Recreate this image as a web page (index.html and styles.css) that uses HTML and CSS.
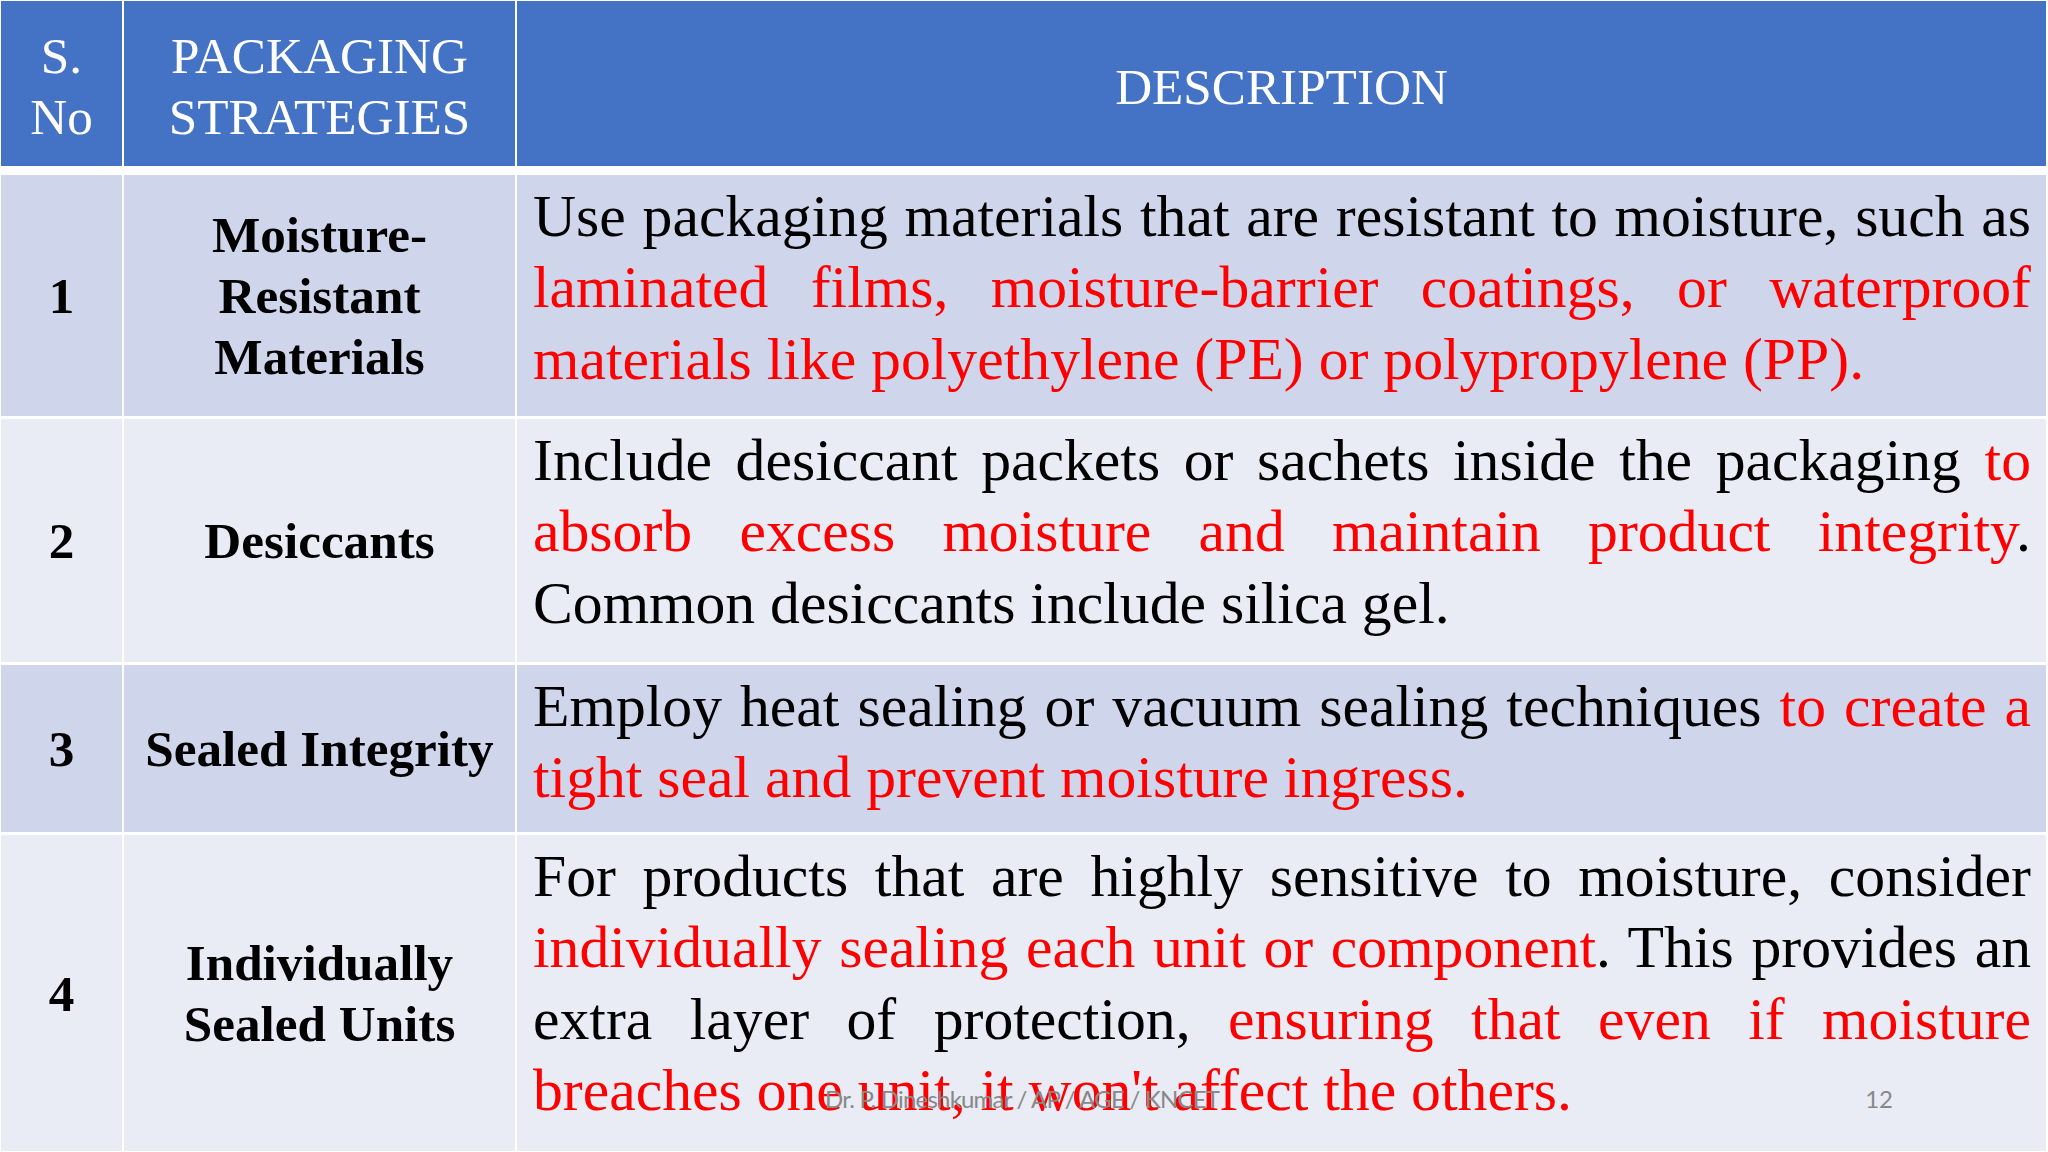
FILE: index.html
```html
<!DOCTYPE html>
<html lang="en">
<head>
<meta charset="utf-8">
<title>Packaging Strategies</title>
<link rel="stylesheet" href="styles.css">
</head>
<body>
<main class="slide">
  <div class="sheet">
    <div class="cell head">S.<br>No</div>
    <div class="cell head">PACKAGING<br>STRATEGIES</div>
    <div class="cell head">DESCRIPTION</div>

    <div class="cell num odd">1</div>
    <div class="cell name odd">Moisture-<br>Resistant<br>Materials</div>
    <div class="cell desc odd">
      <span class="line">Use packaging materials that are resistant to moisture, such as</span>
      <span class="line red">laminated films, moisture-barrier coatings, or waterproof</span>
      <span class="line last red">materials like polyethylene (PE) or polypropylene (PP).</span>
    </div>

    <div class="cell num even">2</div>
    <div class="cell name even">Desiccants</div>
    <div class="cell desc even">
      <span class="line">Include desiccant packets or sachets inside the packaging <span class="red">to</span></span>
      <span class="line"><span class="red">absorb excess moisture and maintain product integrity</span>.</span>
      <span class="line last">Common desiccants include silica gel.</span>
    </div>

    <div class="cell num odd">3</div>
    <div class="cell name odd">Sealed Integrity</div>
    <div class="cell desc odd">
      <span class="line">Employ heat sealing or vacuum sealing techniques <span class="red">to create a</span></span>
      <span class="line last red">tight seal and prevent moisture ingress.</span>
    </div>

    <div class="cell num even">4</div>
    <div class="cell name even">Individually<br>Sealed Units</div>
    <div class="cell desc even">
      <span class="line">For products that are highly sensitive to moisture, consider</span>
      <span class="line"><span class="red">individually sealing each unit or component</span>. This provides an</span>
      <span class="line">extra layer of protection, <span class="red">ensuring that even if moisture</span></span>
      <span class="line last red">breaches one unit, it won't affect the others.</span>
    </div>
  </div>

  <footer class="slide-footer">
    <span class="author">Dr. P. Dineshkumar / AP / AGE / KNCET</span>
    <span class="page-no">12</span>
  </footer>
</main>
</body>
</html>
```

FILE: styles.css
```css
html, body {
  margin: 0;
  padding: 0;
  background: #ffffff;
}

.slide {
  position: relative;
  width: 2048px;
  height: 1152px;
  overflow: hidden;
  background: #ffffff;
  font-family: "Liberation Serif", "Times New Roman", serif;
}

.sheet {
  display: grid;
  grid-template-columns: 121px 391px 1529px;
  grid-template-rows: 171px 241px 243px 167px 316px;
  column-gap: 2px;
  row-gap: 3px;
  padding: 1px 2px 4px 1px;
}

.cell {
  box-sizing: border-box;
  color: #000000;
}

.head {
  background: #4472c4;
  color: #ffffff;
  font-size: 51.2px;
  line-height: 61px;
  text-align: center;
  display: flex;
  align-items: center;
  justify-content: center;
  padding-top: 5px;
  margin-bottom: 6px;
}

.odd {
  background: #cfd5ea;
}

.even {
  background: #e9ebf5;
}

.num,
.name {
  display: flex;
  align-items: center;
  justify-content: center;
  text-align: center;
  font-weight: bold;
  font-size: 51.2px;
  line-height: 61px;
}

.desc {
  padding: 6px 15px 0 16px;
  font-size: 59.7px;
  line-height: 71.3px;
}

.line {
  display: block;
  text-align: justify;
  text-align-last: justify;
  white-space: nowrap;
}

.line.last {
  text-align: left;
  text-align-last: left;
}

.red {
  color: #ff0000;
}

.slide-footer {
  position: absolute;
  left: 825px;
  top: 1083px;
  width: 1068px;
  display: flex;
  justify-content: space-between;
  align-items: baseline;
  font-family: "Lato", "Open Sans", sans-serif;
  font-size: 24px;
  letter-spacing: -0.8px;
  line-height: 32px;
  color: #888888;
}

.page-no {
  letter-spacing: 0;
}
```
